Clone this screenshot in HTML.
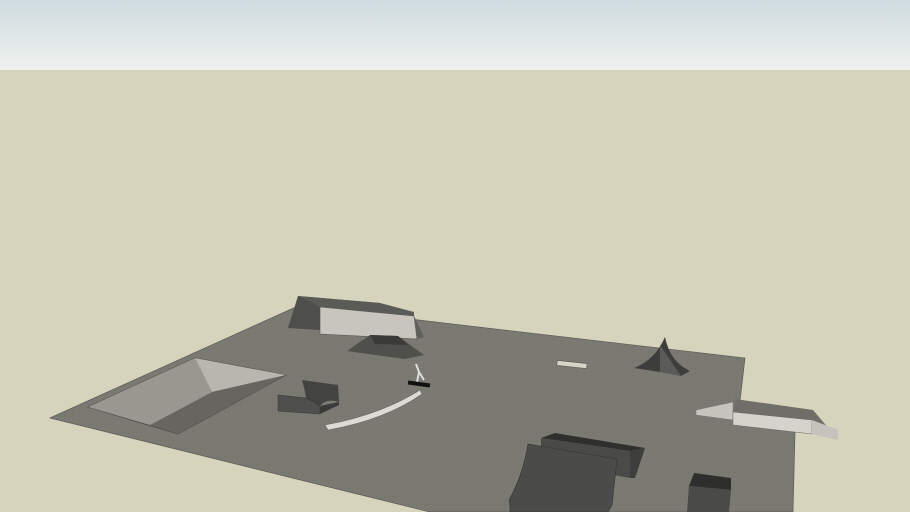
<!DOCTYPE html>
<html><head><style>html,body{margin:0;padding:0;width:910px;height:512px;overflow:hidden;background:#d6d4bd}</style></head>
<body>
<svg width="910" height="512" viewBox="0 0 910 512" xmlns="http://www.w3.org/2000/svg">
<defs>
<linearGradient id="sky" x1="0" y1="0" x2="0" y2="1"><stop offset="0" stop-color="#cfdcdf"/><stop offset="1" stop-color="#eef1ef"/></linearGradient>
<pattern id="tile" width="8" height="8" patternUnits="userSpaceOnUse"><rect width="8" height="8" fill="#7a7972"/><path d="M0 0H8M0 0V8" stroke="#74736c" stroke-width="0.6"/></pattern>
</defs>
<rect width="910" height="70" fill="url(#sky)"/>
<rect y="70" width="910" height="442" fill="#d6d4bd"/>
<polygon points="50,418 298,306 745,358 740,401 795,432 793,512 430,512" fill="url(#tile)" stroke="#5a5a55" stroke-width="0.7"/>
<!-- pool -->
<polygon points="88,407 195,358 286,375 178,434" fill="#8b8a83" stroke="#444" stroke-width="0.8"/>
<polygon points="195,358 286,375 212,392" fill="#b8b6ae"/>
<polygon points="212,392 286,375 178,434 150,425" fill="#66655f"/>
<polygon points="88,407 150,425 212,392 195,358" fill="#989790"/>
<!-- back wall / quarter -->
<polygon points="298,296 380,303 380,310 320,307 320,330 288,328" fill="#4e4e4c"/>
<polygon points="320,307 414,316 417,339 320,334" fill="#c7c5bd" stroke="#555" stroke-width="0.6"/>
<polygon points="298,296 380,303 414,312 414,316 320,307" fill="#5a5a57"/>
<polygon points="414,316 424,337 417,339" fill="#5f5f5c"/>
<!-- funbox -->
<polygon points="347,351 370,335 398,336 424,355 405,359" fill="#4f4f4c"/>
<polygon points="370,335 398,336 408,345 375,344" fill="#3a3a38"/>
<!-- mini quarter -->
<path d="M302,380 L338,385 L339,402 Q326,398 320,406 L306,398 Q305,390 302,380 Z" fill="#434341"/>
<polygon points="278,395 306,398 320,406 320,414 278,411" fill="#4f4f4d" stroke="#333" stroke-width="0.5"/>
<polygon points="320,406 339,402 339,405 320,414" fill="#3a3a39"/>
<!-- curved rail -->
<path d="M325,425 Q380,415 420,390 L422,394 Q385,420 328,430 Z" fill="#dcdad4" stroke="#666" stroke-width="0.6"/>
<!-- skater -->
<path d="M416,364 l3,8 -2,10 M419,372 l5,8" stroke="#ddd" stroke-width="2" fill="none"/>
<rect x="408" y="382" width="22" height="4" fill="#111" transform="rotate(8 419 384)"/>
<rect x="557" y="362" width="30" height="5" fill="#d8d5c6" stroke="#555" stroke-width="0.6" transform="rotate(6 572 364)"/>
<!-- pyramid hip -->
<path d="M634,368 Q655,360 665,337 Q670,362 690,371 L681,376 L660,372 Z" fill="#3d3d3b"/>
<polygon points="660,345 681,376 660,372" fill="#5a5a58"/>
<!-- stairs + ledge -->
<polygon points="696,410 733,402 733,420 696,415" fill="#c6c4bd" stroke="#777" stroke-width="0.5"/>
<polygon points="735,399 813,410 836,437 812,432 733,420" fill="#6f6e69"/>
<polygon points="733,412 812,420 812,434 733,425" fill="#d5d3cb" stroke="#666" stroke-width="0.5"/>
<polygon points="812,420 838,430 838,440 812,434" fill="#c5c3bb"/>
<!-- big box -->
<polygon points="541,438 555,433 645,448 630,451" fill="#2f2f2e"/>
<polygon points="541,438 630,451 630,478 541,462" fill="#4a4a48"/>
<polygon points="630,451 645,448 635,478 630,478" fill="#3e3e3c"/>
<!-- big quarter -->
<path d="M528,444 L617,459 L612,505 L608,512 L510,512 Q510,502 509,500 Q523,475 528,444 Z" fill="#4b4b49" stroke="#333" stroke-width="0.6"/>
<!-- box bottom right -->
<polygon points="694,473 731,478 731,490 689,486" fill="#2e2e2d"/>
<polygon points="689,486 731,490 729,512 687,512" fill="#4a4a48"/>
</svg>
</body></html>
